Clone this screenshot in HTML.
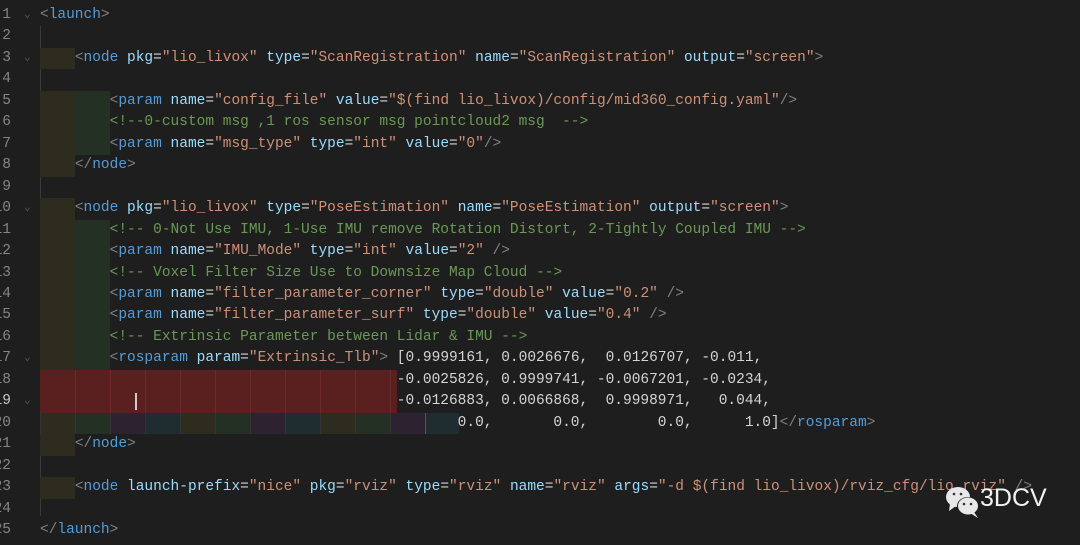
<!DOCTYPE html>
<html><head><meta charset="utf-8"><style>
body{margin:0;background:#1e1e1e;width:1080px;height:545px;overflow:hidden;position:relative;font-family:"Liberation Mono",monospace;font-size:14.5px;}
.l{position:absolute;left:0;height:21.46px;line-height:21.46px;width:1080px;white-space:pre;}
.n{position:absolute;right:1069px;color:#858585;}
.n.a{color:#c6c6c6}
.c{position:absolute;left:40px;color:#d4d4d4}
.g{position:absolute;top:0;height:21.46px;width:35px}
.y{background:#2d2c1f}.gr{background:#243024}.p{background:#2d2330}.b{background:#1f2d31}
.t{color:#808080}.k{color:#569cd6}.at{color:#9cdcfe}.s{color:#ce9178}.cm{color:#6a9955}
.f{position:absolute;left:24px;color:#555;font-size:11px}
.vg{position:absolute;left:40px;width:1px;background:#3a3a3a}
</style></head><body>
<div class="vg" style="top:26px;height:490px"></div>
<div id="w"></div>
<script>
const H=21.46,T=5;
const Y='y',G='gr',P='p',B='b';
const t=s=>`<span class="t">${s}</span>`,k=s=>`<span class="k">${s}</span>`,a=s=>`<span class="at">${s}</span>`,s=x=>`<span class="s">${x}</span>`,c=x=>`<span class="cm">${x}</span>`;
const eq='=';
const L=[
[[],t('&lt;')+k('launch')+t('&gt;'),1],
[[],'',0],
[[Y],'    '+t('&lt;')+k('node')+' '+a('pkg')+eq+s('"lio_livox"')+' '+a('type')+eq+s('"ScanRegistration"')+' '+a('name')+eq+s('"ScanRegistration"')+' '+a('output')+eq+s('"screen"')+t('&gt;'),1],
[[],'',0],
[[Y,G],'        '+t('&lt;')+k('param')+' '+a('name')+eq+s('"config_file"')+' '+a('value')+eq+s('"$(find lio_livox)/config/mid360_config.yaml"')+t('/&gt;'),0],
[[Y,G],'        '+c('&lt;!--0-custom msg ,1 ros sensor msg pointcloud2 msg  --&gt;'),0],
[[Y,G],'        '+t('&lt;')+k('param')+' '+a('name')+eq+s('"msg_type"')+' '+a('type')+eq+s('"int"')+' '+a('value')+eq+s('"0"')+t('/&gt;'),0],
[[Y],'    '+t('&lt;/')+k('node')+t('&gt;'),0],
[[],'',0],
[[Y],'    '+t('&lt;')+k('node')+' '+a('pkg')+eq+s('"lio_livox"')+' '+a('type')+eq+s('"PoseEstimation"')+' '+a('name')+eq+s('"PoseEstimation"')+' '+a('output')+eq+s('"screen"')+t('&gt;'),1],
[[Y,G],'        '+c('&lt;!-- 0-Not Use IMU, 1-Use IMU remove Rotation Distort, 2-Tightly Coupled IMU --&gt;'),0],
[[Y,G],'        '+t('&lt;')+k('param')+' '+a('name')+eq+s('"IMU_Mode"')+' '+a('type')+eq+s('"int"')+' '+a('value')+eq+s('"2"')+' '+t('/&gt;'),0],
[[Y,G],'        '+c('&lt;!-- Voxel Filter Size Use to Downsize Map Cloud --&gt;'),0],
[[Y,G],'        '+t('&lt;')+k('param')+' '+a('name')+eq+s('"filter_parameter_corner"')+' '+a('type')+eq+s('"double"')+' '+a('value')+eq+s('"0.2"')+' '+t('/&gt;'),0],
[[Y,G],'        '+t('&lt;')+k('param')+' '+a('name')+eq+s('"filter_parameter_surf"')+' '+a('type')+eq+s('"double"')+' '+a('value')+eq+s('"0.4"')+' '+t('/&gt;'),0],
[[Y,G],'        '+c('&lt;!-- Extrinsic Parameter between Lidar &amp; IMU --&gt;'),0],
[[Y,G],'        '+t('&lt;')+k('rosparam')+' '+a('param')+eq+s('"Extrinsic_Tlb"')+t('&gt;')+' [0.9999161, 0.0026676,  0.0126707, -0.011,',1],
['R',' '.repeat(41)+'-0.0025826, 0.9999741, -0.0067201, -0.0234,',0],
['R',' '.repeat(41)+'-0.0126883, 0.0066868,  0.9998971,   0.044,',1],
['RB',' '.repeat(48)+'0.0,       0.0,        0.0,      1.0]'+t('&lt;/')+k('rosparam')+t('&gt;'),0],
[[Y],'    '+t('&lt;/')+k('node')+t('&gt;'),0],
[[],'',0],
[[Y],'    '+t('&lt;')+k('node')+' '+a('launch-prefix')+eq+s('"nice"')+' '+a('pkg')+eq+s('"rviz"')+' '+a('type')+eq+s('"rviz"')+' '+a('name')+eq+s('"rviz"')+' '+a('args')+eq+s('"-d $(find lio_livox)/rviz_cfg/lio.rviz"')+' '+t('/&gt;'),0],
[[],'',0],
[[],t('&lt;/')+k('launch')+t('&gt;'),0],
];
let h='';
L.forEach((r,i)=>{
 let g='';
 if(r[0]==='R'){g=`<div class="g" style="left:40px;width:357px;background:#5a1f1f"></div>`;for(let j=1;j<11;j++)g+=`<div class="g" style="left:${40+j*35}px;width:1px;background:#6a2a2a"></div>`;}
 else if(r[0]==='RB'){const cs=[Y,G,P,B];for(let j=0;j<11;j++)g+=`<div class="g ${cs[j%4]}" style="left:${40+j*35}px;border-left:1px solid #333"></div>`;g+=`<div class="g b" style="left:425px;width:33px;border-left:1px solid #555"></div>`;}
 else r[0].forEach((c,j)=>g+=`<div class="g ${c}" style="left:${40+j*35}px"></div>`);
 h+=`<div class="l" style="top:${T+i*H}px">${g}<span class="n${i==18?' a':''}">${i+1}</span>${r[2]?'<span class="f">⌄</span>':''}<span class="c">${r[1]}</span></div>`;
});
h+=`<div style="position:absolute;left:135px;top:${T+18*H+2}px;width:2px;height:17px;background:#ccc"></div>`;
document.getElementById('w').innerHTML=h;
</script>
<svg style="position:absolute;left:936px;top:482px" width="60" height="40" viewBox="0 0 60 40">
<ellipse cx="22" cy="15" rx="12" ry="10" fill="#e8e8e8"/><path d="M14 22 L13 29 L20 24Z" fill="#e8e8e8"/>
<ellipse cx="32" cy="24" rx="11" ry="9" fill="#1e1e1e"/>
<ellipse cx="32" cy="24" rx="10" ry="8.5" fill="#e8e8e8"/><path d="M38 30 L42 36 L34 31Z" fill="#e8e8e8"/>
<circle cx="28" cy="22" r="1.3" fill="#333"/><circle cx="35" cy="22" r="1.3" fill="#333"/>
<circle cx="18" cy="12" r="1.3" fill="#333"/><circle cx="25" cy="12" r="1.3" fill="#333"/>
</svg>
<div style="position:absolute;left:980px;top:484px;font-family:'Liberation Sans',sans-serif;font-size:25px;color:#f2f2f2">3DCV</div>
</body></html>
